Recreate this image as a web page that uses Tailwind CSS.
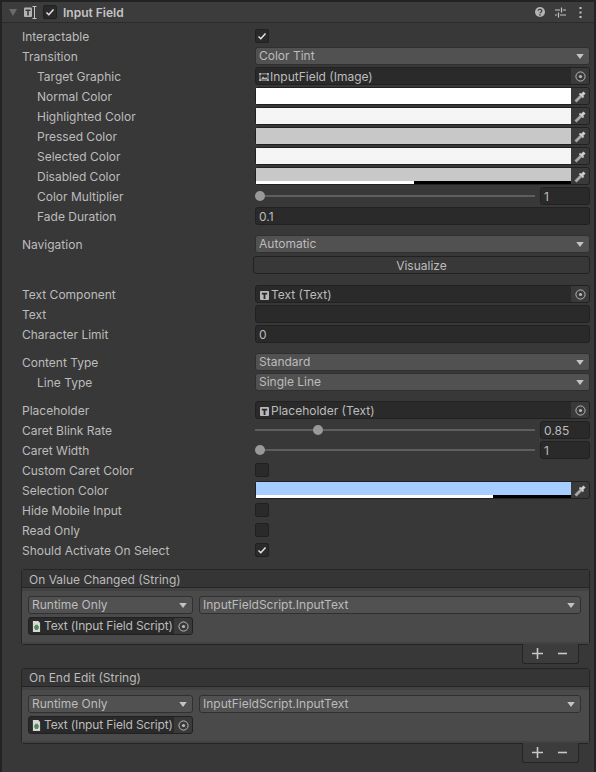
<!DOCTYPE html>
<html>
<head>
<meta charset="utf-8">
<script src="https://cdn.jsdelivr.net/npm/@tailwindcss/browser@4"></script>
</head>
<body class="m-0 bg-[#383838]">
<div class="w-[596px] h-[772px] overflow-hidden bg-[#383838] border-l-2 border-r-2 border-t-2 border-[#232323] font-['Inter','Noto_Sans',sans-serif] text-[12px] leading-none text-[#bcbcbc]">
  <!-- Header -->
  <div class="flex items-center h-[21px] bg-[#3c3c3c] border-b border-[#2b2b2b]">
    <svg class="ml-[7px] w-[8px] h-[7px] mt-px" viewBox="0 0 8 7"><path d="M0 0h8L4 7z" fill="#6a6a6a"/></svg>
    <svg class="ml-[7px] w-[14px] h-[14px]" viewBox="0 0 14 14"><rect x="0" y="2.500" width="8" height="9.500" rx="1" fill="#b4b4b4"/><path d="M1.500 4.500h5v1.500H4.800v4.500H3.200V6H1.500z" fill="#3c3c3c"/><path d="M10.500 1.500v12M8.500 1.500h4M8.500 13.500h4" stroke="#c4c4c4" fill="none"/></svg>
    <div class="ml-[5px] w-[14px] h-[14px] rounded-[2px] bg-[#2a2a2a] border border-[#202020] flex items-center justify-center">
      <svg class="w-[10px] h-[10px]" viewBox="0 0 10 10"><path d="M1.500 5.500l2.300 2.200L8.500 2.500" stroke="#e6e6e6" stroke-width="1.500" fill="none"/></svg>
    </div>
    <span class="ml-[6px] pt-[2px] font-semibold text-[#c4c4c4]">Input Field</span>
    <div class="ml-auto flex items-center">
      <svg class="w-[10px] h-[10px]" viewBox="0 0 11 11"><circle cx="5.500" cy="5.500" r="5.500" fill="#b4b4b4"/><path d="M3.500 4.200a2 1.700 0 1 1 3 1.500c-.7.4-1 .7-1 1.300" stroke="#3c3c3c" stroke-width="1.400" fill="none"/><rect x="4.700" y="7.900" width="1.600" height="1.500" fill="#3c3c3c"/></svg>
      <svg class="ml-[10px] w-[11px] h-[11px]" viewBox="0 0 11 11"><path d="M0 3h5M8 3h3M0 8h2M5 8h6M6.500 .5v5M3.500 5.500v5" stroke="#c4c4c4" stroke-width="1.200" fill="none"/></svg>
      <svg class="ml-[13px] mr-[12px] w-[3px] h-[11px]" viewBox="0 0 3 11"><rect x=".5" y="0" width="2" height="2" fill="#c4c4c4"/><rect x=".5" y="4.500" width="2" height="2" fill="#c4c4c4"/><rect x=".5" y="9" width="2" height="2" fill="#c4c4c4"/></svg>
    </div>
  </div>

  <!-- Properties -->
  <div class="pl-[20px] pr-[4px] pt-[3px]">
    <div class="flex items-center h-5"><span class="w-[233px] pt-[2px]">Interactable</span>
      <div class="w-[14px] h-[14px] rounded-[2px] bg-[#2a2a2a] border border-[#202020] flex items-center justify-center"><svg class="w-[10px] h-[10px]" viewBox="0 0 10 10"><path d="M1.500 5.500l2.300 2.200L8.500 2.500" stroke="#e6e6e6" stroke-width="1.500" fill="none"/></svg></div>
    </div>
    <div class="flex items-center h-5"><span class="w-[233px] pt-[2px]">Transition</span>
      <div class="flex-1 h-[18px] rounded-[3px] bg-[#515151] border border-[#303030] flex items-center justify-between pl-[3px] pr-[5px]"><span>Color Tint</span><svg class="w-[8px] h-[5px]" viewBox="0 0 9 6"><path d="M0 0h9L4.500 6z" fill="#c4c4c4"/></svg></div>
    </div>
    <div class="flex items-center h-5"><span class="w-[233px] pl-[15px] pt-[2px]">Target Graphic</span>
      <div class="flex-1 h-[18px] rounded-[3px] bg-[#2a2a2a] border border-[#212121] flex items-center pl-[3px]">
        <svg class="w-[10px] h-[8px] mr-[1px] mt-[2px]" viewBox="0 0 11 9"><rect x="1" y="1" width="9" height="7" fill="none" stroke="#b8b8b8"/><path d="M2 7l2.500-3 2 2 1.500-1.500L9.500 7z" fill="#b8b8b8"/><rect x="0" y="0" width="2" height="2" fill="#b8b8b8"/><rect x="9" y="0" width="2" height="2" fill="#b8b8b8"/><rect x="0" y="7" width="2" height="2" fill="#b8b8b8"/><rect x="9" y="7" width="2" height="2" fill="#b8b8b8"/></svg>
        <span class="pt-[2px]">InputField (Image)</span>
        <div class="ml-auto w-[18px] h-full bg-[#3a3a3a] rounded-r-[2px] flex items-center justify-center"><svg class="w-[11px] h-[11px]" viewBox="0 0 11 11"><circle cx="5.500" cy="5.500" r="4.600" fill="none" stroke="#b8b8b8"/><circle cx="5.500" cy="5.500" r="1.600" fill="#b8b8b8"/></svg></div>
      </div>
    </div>
    <div class="flex items-center h-5"><span class="w-[233px] pl-[15px] pt-[2px]">Normal Color</span>
      <div class="flex-1 h-[18px] flex rounded-[3px] border border-[#212121] bg-[#3a3a3a]"><div class="flex-1 bg-white"></div><div class="w-[18px] flex items-center justify-center"><svg class="w-[13px] h-[13px]" viewBox="0 0 13 13"><path d="M1.500 11.500L7 6" stroke="#a8a8a8" stroke-width="2.800" fill="none"/><path d="M5.500 3.500L9.500 7.500" stroke="#c8c8c8" stroke-width="1.800" fill="none"/><path d="M7.500 5.500L10.500 2.500" stroke="#d0d0d0" stroke-width="3" fill="none"/></svg></div></div>
    </div>
    <div class="flex items-center h-5"><span class="w-[233px] pl-[15px] pt-[2px]">Highlighted Color</span>
      <div class="flex-1 h-[18px] flex rounded-[3px] border border-[#212121] bg-[#3a3a3a]"><div class="flex-1 bg-[#f5f5f5]"></div><div class="w-[18px] flex items-center justify-center"><svg class="w-[13px] h-[13px]" viewBox="0 0 13 13"><path d="M1.500 11.500L7 6" stroke="#a8a8a8" stroke-width="2.800" fill="none"/><path d="M5.500 3.500L9.500 7.500" stroke="#c8c8c8" stroke-width="1.800" fill="none"/><path d="M7.500 5.500L10.500 2.500" stroke="#d0d0d0" stroke-width="3" fill="none"/></svg></div></div>
    </div>
    <div class="flex items-center h-5"><span class="w-[233px] pl-[15px] pt-[2px]">Pressed Color</span>
      <div class="flex-1 h-[18px] flex rounded-[3px] border border-[#212121] bg-[#3a3a3a]"><div class="flex-1 bg-[#c8c8c8]"></div><div class="w-[18px] flex items-center justify-center"><svg class="w-[13px] h-[13px]" viewBox="0 0 13 13"><path d="M1.500 11.500L7 6" stroke="#a8a8a8" stroke-width="2.800" fill="none"/><path d="M5.500 3.500L9.500 7.500" stroke="#c8c8c8" stroke-width="1.800" fill="none"/><path d="M7.500 5.500L10.500 2.500" stroke="#d0d0d0" stroke-width="3" fill="none"/></svg></div></div>
    </div>
    <div class="flex items-center h-5"><span class="w-[233px] pl-[15px] pt-[2px]">Selected Color</span>
      <div class="flex-1 h-[18px] flex rounded-[3px] border border-[#212121] bg-[#3a3a3a]"><div class="flex-1 bg-[#f5f5f5]"></div><div class="w-[18px] flex items-center justify-center"><svg class="w-[13px] h-[13px]" viewBox="0 0 13 13"><path d="M1.500 11.500L7 6" stroke="#a8a8a8" stroke-width="2.800" fill="none"/><path d="M5.500 3.500L9.500 7.500" stroke="#c8c8c8" stroke-width="1.800" fill="none"/><path d="M7.500 5.500L10.500 2.500" stroke="#d0d0d0" stroke-width="3" fill="none"/></svg></div></div>
    </div>
    <div class="flex items-center h-5"><span class="w-[233px] pl-[15px] pt-[2px]">Disabled Color</span>
      <div class="flex-1 h-[18px] flex rounded-[3px] border border-[#212121] bg-[#3a3a3a]"><div class="flex-1 flex flex-col bg-[#c8c8c8] justify-end"><div class="h-[3px] flex bg-black"><div class="w-[158px] bg-white"></div></div></div><div class="w-[18px] flex items-center justify-center"><svg class="w-[13px] h-[13px]" viewBox="0 0 13 13"><path d="M1.500 11.500L7 6" stroke="#a8a8a8" stroke-width="2.800" fill="none"/><path d="M5.500 3.500L9.500 7.500" stroke="#c8c8c8" stroke-width="1.800" fill="none"/><path d="M7.500 5.500L10.500 2.500" stroke="#d0d0d0" stroke-width="3" fill="none"/></svg></div></div>
    </div>
    <div class="flex items-center h-5"><span class="w-[233px] pl-[15px] pt-[2px]">Color Multiplier</span>
      <div class="flex-1 flex items-center">
        <div class="relative w-[280px] h-[2px] bg-[#5e5e5e]"><div class="absolute left-0 top-[-4px] w-[10px] h-[10px] rounded-full bg-[#999999]"></div></div>
        <div class="ml-[5px] flex-1 h-[18px] rounded-[3px] bg-[#2a2a2a] border border-[#212121] flex items-center pl-[3px] pt-[2px]">1</div>
      </div>
    </div>
    <div class="flex items-center h-5"><span class="w-[233px] pl-[15px] pt-[2px]">Fade Duration</span>
      <div class="flex-1 h-[18px] rounded-[3px] bg-[#2a2a2a] border border-[#212121] flex items-center pl-[3px] pt-[2px]">0.1</div>
    </div>

    <div class="flex items-center h-5 mt-2"><span class="w-[233px] pt-[2px]">Navigation</span>
      <div class="flex-1 h-[18px] rounded-[3px] bg-[#515151] border border-[#303030] flex items-center justify-between pl-[3px] pr-[5px]"><span>Automatic</span><svg class="w-[8px] h-[5px]" viewBox="0 0 9 6"><path d="M0 0h9L4.500 6z" fill="#c4c4c4"/></svg></div>
    </div>
    <div class="flex items-center h-[19px] mt-px"><span class="w-[231px]"></span>
      <div class="flex-1 h-[18px] rounded-[3px] bg-[#383838] border border-[#212121] flex items-center justify-center pt-[2px]">Visualize</div>
    </div>

    <div class="flex items-center h-5 mt-[10px]"><span class="w-[233px] pt-[2px]">Text Component</span>
      <div class="flex-1 h-[18px] rounded-[3px] bg-[#2a2a2a] border border-[#212121] flex items-center pl-[4px]">
        <svg class="w-[9px] h-[9px] mr-[2px] mt-[2px]" viewBox="0 0 10 10"><rect width="10" height="10" rx="1" fill="#b8b8b8"/><path d="M2 2h6v2H6v5H4V4H2z" fill="#2a2a2a"/></svg>
        <span class="pt-[2px]">Text (Text)</span>
        <div class="ml-auto w-[18px] h-full bg-[#3a3a3a] rounded-r-[2px] flex items-center justify-center"><svg class="w-[11px] h-[11px]" viewBox="0 0 11 11"><circle cx="5.500" cy="5.500" r="4.600" fill="none" stroke="#b8b8b8"/><circle cx="5.500" cy="5.500" r="1.600" fill="#b8b8b8"/></svg></div>
      </div>
    </div>
    <div class="flex items-center h-5"><span class="w-[233px] pt-[2px]">Text</span>
      <div class="flex-1 h-[18px] rounded-[3px] bg-[#2a2a2a] border border-[#212121]"></div>
    </div>
    <div class="flex items-center h-5"><span class="w-[233px] pt-[2px]">Character Limit</span>
      <div class="flex-1 h-[18px] rounded-[3px] bg-[#2a2a2a] border border-[#212121] flex items-center pl-[3px] pt-[2px]">0</div>
    </div>

    <div class="flex items-center h-5 mt-2"><span class="w-[233px] pt-[2px]">Content Type</span>
      <div class="flex-1 h-[18px] rounded-[3px] bg-[#515151] border border-[#303030] flex items-center justify-between pl-[3px] pr-[5px]"><span>Standard</span><svg class="w-[8px] h-[5px]" viewBox="0 0 9 6"><path d="M0 0h9L4.500 6z" fill="#c4c4c4"/></svg></div>
    </div>
    <div class="flex items-center h-5"><span class="w-[233px] pl-[15px] pt-[2px]">Line Type</span>
      <div class="flex-1 h-[18px] rounded-[3px] bg-[#515151] border border-[#303030] flex items-center justify-between pl-[3px] pr-[5px]"><span>Single Line</span><svg class="w-[8px] h-[5px]" viewBox="0 0 9 6"><path d="M0 0h9L4.500 6z" fill="#c4c4c4"/></svg></div>
    </div>

    <div class="flex items-center h-5 mt-2"><span class="w-[233px] pt-[2px]">Placeholder</span>
      <div class="flex-1 h-[18px] rounded-[3px] bg-[#2a2a2a] border border-[#212121] flex items-center pl-[4px]">
        <svg class="w-[9px] h-[9px] mr-[2px] mt-[2px]" viewBox="0 0 10 10"><rect width="10" height="10" rx="1" fill="#b8b8b8"/><path d="M2 2h6v2H6v5H4V4H2z" fill="#2a2a2a"/></svg>
        <span class="pt-[2px]">Placeholder (Text)</span>
        <div class="ml-auto w-[18px] h-full bg-[#3a3a3a] rounded-r-[2px] flex items-center justify-center"><svg class="w-[11px] h-[11px]" viewBox="0 0 11 11"><circle cx="5.500" cy="5.500" r="4.600" fill="none" stroke="#b8b8b8"/><circle cx="5.500" cy="5.500" r="1.600" fill="#b8b8b8"/></svg></div>
      </div>
    </div>
    <div class="flex items-center h-5"><span class="w-[233px] pt-[2px]">Caret Blink Rate</span>
      <div class="flex-1 flex items-center">
        <div class="relative w-[280px] h-[2px] bg-[#5e5e5e]"><div class="absolute left-[58px] top-[-4px] w-[10px] h-[10px] rounded-full bg-[#999999]"></div></div>
        <div class="ml-[5px] flex-1 h-[18px] rounded-[3px] bg-[#2a2a2a] border border-[#212121] flex items-center pl-[3px] pt-[2px]">0.85</div>
      </div>
    </div>
    <div class="flex items-center h-5"><span class="w-[233px] pt-[2px]">Caret Width</span>
      <div class="flex-1 flex items-center">
        <div class="relative w-[280px] h-[2px] bg-[#5e5e5e]"><div class="absolute left-0 top-[-4px] w-[10px] h-[10px] rounded-full bg-[#999999]"></div></div>
        <div class="ml-[5px] flex-1 h-[18px] rounded-[3px] bg-[#2a2a2a] border border-[#212121] flex items-center pl-[3px] pt-[2px]">1</div>
      </div>
    </div>
    <div class="flex items-center h-5"><span class="w-[233px] pt-[2px]">Custom Caret Color</span>
      <div class="w-[14px] h-[14px] rounded-[2px] bg-[#2a2a2a] border border-[#202020]"></div>
    </div>
    <div class="flex items-center h-5"><span class="w-[233px] pt-[2px]">Selection Color</span>
      <div class="flex-1 h-[18px] flex rounded-[3px] border border-[#212121] bg-[#3a3a3a]"><div class="flex-1 flex flex-col bg-[#a6cdff] justify-end"><div class="h-[3px] flex bg-black"><div class="w-[237px] bg-white"></div></div></div><div class="w-[18px] flex items-center justify-center"><svg class="w-[13px] h-[13px]" viewBox="0 0 13 13"><path d="M1.500 11.500L7 6" stroke="#a8a8a8" stroke-width="2.800" fill="none"/><path d="M5.500 3.500L9.500 7.500" stroke="#c8c8c8" stroke-width="1.800" fill="none"/><path d="M7.500 5.500L10.500 2.500" stroke="#d0d0d0" stroke-width="3" fill="none"/></svg></div></div>
    </div>
    <div class="flex items-center h-5"><span class="w-[233px] pt-[2px]">Hide Mobile Input</span>
      <div class="w-[14px] h-[14px] rounded-[2px] bg-[#2a2a2a] border border-[#202020]"></div>
    </div>
    <div class="flex items-center h-5"><span class="w-[233px] pt-[2px]">Read Only</span>
      <div class="w-[14px] h-[14px] rounded-[2px] bg-[#2a2a2a] border border-[#202020]"></div>
    </div>
    <div class="flex items-center h-5"><span class="w-[233px] pt-[2px]">Should Activate On Select</span>
      <div class="w-[14px] h-[14px] rounded-[2px] bg-[#2a2a2a] border border-[#202020] flex items-center justify-center"><svg class="w-[10px] h-[10px]" viewBox="0 0 10 10"><path d="M1.500 5.500l2.300 2.200L8.500 2.500" stroke="#e6e6e6" stroke-width="1.500" fill="none"/></svg></div>
    </div>
  </div>

  <!-- Events -->
  <div class="ml-[19px] mr-[4px] mt-[9px]">
    <div class="rounded-[3px] border border-[#242424] bg-[#4a4a4a]">
      <div class="h-[18px] bg-[#353535] border-b border-[#242424] flex items-center pl-[7px] pt-[2px] rounded-t-[2px]">On Value Changed (String)</div>
      <div class="h-[56px] border-t-[3px] border-[#424242] pl-[6px] pr-[8px] pt-[5px] border-b-[2px]">
        <div class="flex h-[18px] gap-[6px]">
          <div class="w-[165px] rounded-[3px] bg-[#515151] border border-[#303030] flex items-center justify-between pl-[3px] pr-[5px]"><span>Runtime Only</span><svg class="w-[8px] h-[5px]" viewBox="0 0 9 6"><path d="M0 0h9L4.500 6z" fill="#c4c4c4"/></svg></div>
          <div class="flex-1 rounded-[3px] bg-[#515151] border border-[#303030] flex items-center justify-between pl-[3px] pr-[5px]"><span>InputFieldScript.InputText</span><svg class="w-[8px] h-[5px]" viewBox="0 0 9 6"><path d="M0 0h9L4.500 6z" fill="#c4c4c4"/></svg></div>
        </div>
        <div class="mt-[3px] w-[165px] h-[18px] rounded-[3px] bg-[#2a2a2a] border border-[#212121] flex items-center pl-[3px]">
          <svg class="w-[9px] h-[11px] mr-[3px] shrink-0" viewBox="0 0 10 12"><path d="M1 0h6l2 2v10H1z" fill="#d8d8d8"/><path d="M3.500 4h3v1.500H7.500v3H6.500V10h-3V8.500H2.500v-3h1z" fill="#4f8a54"/></svg>
          <span class="whitespace-nowrap tracking-[-0.15px]">Text (Input Field Script)</span>
          <div class="ml-auto w-[18px] shrink-0 h-full bg-[#3a3a3a] rounded-r-[2px] flex items-center justify-center"><svg class="w-[11px] h-[11px]" viewBox="0 0 11 11"><circle cx="5.500" cy="5.500" r="4.600" fill="none" stroke="#b8b8b8"/><circle cx="5.500" cy="5.500" r="1.600" fill="#b8b8b8"/></svg></div>
        </div>
      </div>
    </div>
    <div class="flex justify-end pr-[11px] -mt-px">
      <div class="w-[57px] h-[20px] bg-[#3c3c3c] border border-t-0 border-[#242424] rounded-b-[3px] flex items-center justify-start pl-[9px] gap-[15px]">
        <svg class="w-[11px] h-[11px]" viewBox="0 0 11 11"><path d="M0 4.700h11v1.600H0zM4.700 0h1.600v11H4.700z" fill="#c8c8c8"/></svg>
        <svg class="w-[9px] h-[11px]" viewBox="0 0 9 11"><path d="M0 4.700h9v1.600H0z" fill="#c8c8c8"/></svg>
      </div>
    </div>

    <div class="rounded-[3px] border border-[#242424] bg-[#4a4a4a] mt-[4px]">
      <div class="h-[18px] bg-[#353535] border-b border-[#242424] flex items-center pl-[7px] rounded-t-[2px]">On End Edit (String)</div>
      <div class="h-[56px] border-t-[3px] border-[#424242] pl-[6px] pr-[8px] pt-[5px] border-b-[2px]">
        <div class="flex h-[18px] gap-[6px]">
          <div class="w-[165px] rounded-[3px] bg-[#515151] border border-[#303030] flex items-center justify-between pl-[3px] pr-[5px]"><span>Runtime Only</span><svg class="w-[8px] h-[5px]" viewBox="0 0 9 6"><path d="M0 0h9L4.500 6z" fill="#c4c4c4"/></svg></div>
          <div class="flex-1 rounded-[3px] bg-[#515151] border border-[#303030] flex items-center justify-between pl-[3px] pr-[5px]"><span>InputFieldScript.InputText</span><svg class="w-[8px] h-[5px]" viewBox="0 0 9 6"><path d="M0 0h9L4.500 6z" fill="#c4c4c4"/></svg></div>
        </div>
        <div class="mt-[3px] w-[165px] h-[18px] rounded-[3px] bg-[#2a2a2a] border border-[#212121] flex items-center pl-[3px]">
          <svg class="w-[9px] h-[11px] mr-[3px] shrink-0" viewBox="0 0 10 12"><path d="M1 0h6l2 2v10H1z" fill="#d8d8d8"/><path d="M3.500 4h3v1.500H7.500v3H6.500V10h-3V8.500H2.500v-3h1z" fill="#4f8a54"/></svg>
          <span class="whitespace-nowrap tracking-[-0.15px]">Text (Input Field Script)</span>
          <div class="ml-auto w-[18px] shrink-0 h-full bg-[#3a3a3a] rounded-r-[2px] flex items-center justify-center"><svg class="w-[11px] h-[11px]" viewBox="0 0 11 11"><circle cx="5.500" cy="5.500" r="4.600" fill="none" stroke="#b8b8b8"/><circle cx="5.500" cy="5.500" r="1.600" fill="#b8b8b8"/></svg></div>
        </div>
      </div>
    </div>
    <div class="flex justify-end pr-[11px] -mt-px">
      <div class="w-[57px] h-[20px] bg-[#3c3c3c] border border-t-0 border-[#242424] rounded-b-[3px] flex items-center justify-start pl-[9px] gap-[15px]">
        <svg class="w-[11px] h-[11px]" viewBox="0 0 11 11"><path d="M0 4.700h11v1.600H0zM4.700 0h1.600v11H4.700z" fill="#c8c8c8"/></svg>
        <svg class="w-[9px] h-[11px]" viewBox="0 0 9 11"><path d="M0 4.700h9v1.600H0z" fill="#c8c8c8"/></svg>
      </div>
    </div>
  </div>
</div>
</body>
</html>
